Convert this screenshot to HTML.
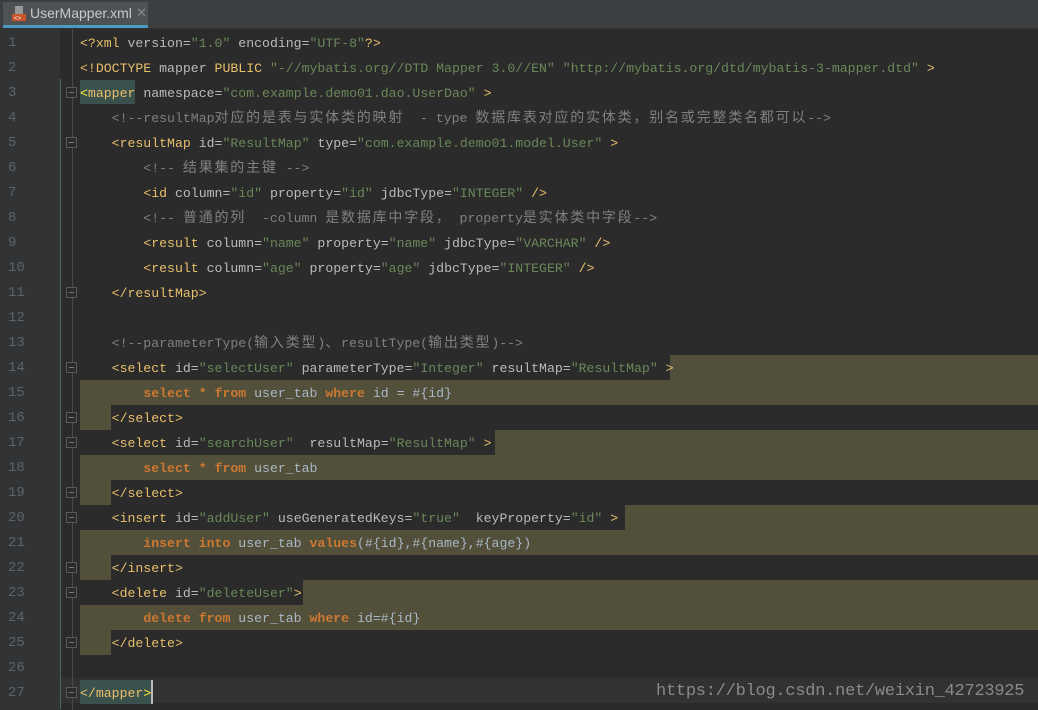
<!DOCTYPE html>
<html><head><meta charset="utf-8"><style>
body{margin:0;width:1038px;height:710px;overflow:hidden;background:#2b2b2b;position:relative;font-family:"Liberation Mono","Noto Sans CJK SC",monospace;}
#tabbar{position:absolute;left:0;top:0;width:1038px;height:28px;background:#3c3f41;border-bottom:1px solid #323232}
#tab{position:absolute;left:3px;top:2px;width:145px;height:24px;background:#4e5254;}
#tab .ul{position:absolute;left:0;bottom:-2px;width:145px;height:3px;background:#4a9ac4}
#tab .t{position:absolute;left:27px;top:3px;font:14px "Liberation Sans",sans-serif;color:#c8c8c8}
#tab .x{position:absolute;left:133px;top:3px;font:13px "Liberation Sans",sans-serif;color:#888}
#gutter{position:absolute;left:0;top:29px;width:60px;height:681px;background:#313335}
#gl{position:absolute;left:60px;top:79px;width:1px;height:630px;background:#3f6b63}
#fl{position:absolute;left:72px;top:29px;width:1px;height:681px;background:#4a4a4a}
.n{position:absolute;left:8px;width:20px;font-size:14px;color:#5f6366;line-height:25px}
.l{position:absolute;left:80px;font-size:13.2px;line-height:25px;white-space:pre;color:#a9b7c6}
.z{font-family:"Noto Sans CJK SC",sans-serif;font-size:14px;letter-spacing:1.8px;line-height:20px}
.tg{color:#e8bf6a}.at{color:#bababa}.v{color:#6a8759}.c{color:#808080}.k{color:#cc7832;font-weight:bold}
.h{position:absolute;background:#52503a}
.f{position:absolute;left:66px;width:11px;height:11px;border:1px solid #5a5a5a;background:#2b2b2b;box-sizing:border-box}
.f:after{content:"";position:absolute;left:2px;top:4px;width:5px;height:1px;background:#777}
</style></head><body>
<div id="tabbar"><div id="tab"><svg style="position:absolute;left:9px;top:4px" width="14" height="16"><rect x="3" y="0" width="8" height="8" fill="#999"/><rect x="0" y="8" width="14" height="7" fill="#c9552c"/><text x="2" y="14" font-size="6" fill="#fff" font-family="Liberation Mono">&lt;&gt;</text></svg><span class="t">UserMapper.xml</span><span class="x">✕</span><div class="ul"></div></div></div>
<div id="gutter"></div>
<div style="position:absolute;left:61px;top:678px;width:977px;height:25px;background:#323232"></div>
<div class="h" style="left:670px;top:355px;width:368px;height:25px"></div>
<div class="h" style="left:80px;top:380px;width:958px;height:25px"></div>
<div class="h" style="left:80px;top:405px;width:31px;height:25px"></div>
<div class="h" style="left:495px;top:430px;width:543px;height:25px"></div>
<div class="h" style="left:80px;top:455px;width:958px;height:25px"></div>
<div class="h" style="left:80px;top:480px;width:31px;height:25px"></div>
<div class="h" style="left:625px;top:505px;width:413px;height:25px"></div>
<div class="h" style="left:80px;top:530px;width:958px;height:25px"></div>
<div class="h" style="left:80px;top:555px;width:31px;height:25px"></div>
<div class="h" style="left:303px;top:580px;width:735px;height:25px"></div>
<div class="h" style="left:80px;top:605px;width:958px;height:25px"></div>
<div class="h" style="left:80px;top:630px;width:31px;height:25px"></div>
<div style="position:absolute;left:80px;top:80px;width:55px;height:24px;background:#3b514d"></div>
<div style="position:absolute;left:80px;top:680px;width:72px;height:24px;background:#3b514d"></div>
<div style="position:absolute;left:151px;top:680px;width:2px;height:24px;background:#bbb"></div>
<div id="gl"></div><div id="fl"></div>
<div class="f" style="top:87px"></div><div class="f" style="top:137px"></div><div class="f" style="top:287px"></div>
<div class="f" style="top:362px"></div><div class="f" style="top:412px"></div><div class="f" style="top:437px"></div><div class="f" style="top:487px"></div>
<div class="f" style="top:512px"></div><div class="f" style="top:562px"></div><div class="f" style="top:587px"></div><div class="f" style="top:637px"></div><div class="f" style="top:687px"></div>
<div class="n" style="top:31px">1</div><div class="n" style="top:56px">2</div><div class="n" style="top:81px">3</div><div class="n" style="top:106px">4</div><div class="n" style="top:131px">5</div><div class="n" style="top:156px">6</div><div class="n" style="top:181px">7</div><div class="n" style="top:206px">8</div><div class="n" style="top:231px">9</div><div class="n" style="top:256px">10</div><div class="n" style="top:281px">11</div><div class="n" style="top:306px">12</div><div class="n" style="top:331px">13</div><div class="n" style="top:356px">14</div><div class="n" style="top:381px">15</div><div class="n" style="top:406px">16</div><div class="n" style="top:431px">17</div><div class="n" style="top:456px">18</div><div class="n" style="top:481px">19</div><div class="n" style="top:506px">20</div><div class="n" style="top:531px">21</div><div class="n" style="top:556px">22</div><div class="n" style="top:581px">23</div><div class="n" style="top:606px">24</div><div class="n" style="top:631px">25</div><div class="n" style="top:656px">26</div><div class="n" style="top:681px">27</div>
<div class="l" style="top:31px"><span class="tg">&lt;?xml </span><span class="at">version=</span><span class="v">"1.0"</span><span class="at"> encoding=</span><span class="v">"UTF-8"</span><span class="tg">?&gt;</span></div>
<div class="l" style="top:56px"><span class="tg">&lt;!DOCTYPE </span><span class="at">mapper </span><span class="tg">PUBLIC </span><span class="v">"-//mybatis.org//DTD Mapper 3.0//EN"</span> <span class="v">"http://mybatis.org/dtd/mybatis-3-mapper.dtd"</span><span class="tg"> &gt;</span></div>
<div class="l" style="top:81px"><span class="tg"><span style="color:#ffef28">&lt;</span>mapper </span><span class="at">namespace=</span><span class="v">"com.example.demo01.dao.UserDao"</span><span class="tg"> &gt;</span></div>
<div class="l" style="top:106px"><span class="c">    &lt;!--resultMap<span class="z">对应的是表与实体类的映射</span>  - type <span class="z">数据库表对应的实体类，别名或完整类名都可以</span>--&gt;</span></div>
<div class="l" style="top:131px">    <span class="tg">&lt;resultMap </span><span class="at">id=</span><span class="v">"ResultMap"</span><span class="at"> type=</span><span class="v">"com.example.demo01.model.User"</span><span class="tg"> &gt;</span></div>
<div class="l" style="top:156px"><span class="c">        &lt;!-- <span class="z">结果集的主键</span> --&gt;</span></div>
<div class="l" style="top:181px">        <span class="tg">&lt;id </span><span class="at">column=</span><span class="v">"id"</span><span class="at"> property=</span><span class="v">"id"</span><span class="at"> jdbcType=</span><span class="v">"INTEGER"</span><span class="tg"> /&gt;</span></div>
<div class="l" style="top:206px"><span class="c">        &lt;!-- <span class="z">普通的列</span>  -column <span class="z">是数据库中字段，</span> property<span class="z">是实体类中字段</span>--&gt;</span></div>
<div class="l" style="top:231px">        <span class="tg">&lt;result </span><span class="at">column=</span><span class="v">"name"</span><span class="at"> property=</span><span class="v">"name"</span><span class="at"> jdbcType=</span><span class="v">"VARCHAR"</span><span class="tg"> /&gt;</span></div>
<div class="l" style="top:256px">        <span class="tg">&lt;result </span><span class="at">column=</span><span class="v">"age"</span><span class="at"> property=</span><span class="v">"age"</span><span class="at"> jdbcType=</span><span class="v">"INTEGER"</span><span class="tg"> /&gt;</span></div>
<div class="l" style="top:281px">    <span class="tg">&lt;/resultMap&gt;</span></div>
<div class="l" style="top:331px"><span class="c">    &lt;!--parameterType(<span class="z">输入类型</span>)<span class="z">、</span>resultType(<span class="z">输出类型</span>)--&gt;</span></div>
<div class="l" style="top:356px">    <span class="tg">&lt;select </span><span class="at">id=</span><span class="v">"selectUser"</span><span class="at"> parameterType=</span><span class="v">"Integer"</span><span class="at"> resultMap=</span><span class="v">"ResultMap"</span><span class="tg"> &gt;</span></div>
<div class="l" style="top:381px">        <span class="k">select</span> <span class="k">*</span> <span class="k">from</span> user_tab <span class="k">where</span> id = #{id}</div>
<div class="l" style="top:406px">    <span class="tg">&lt;/select&gt;</span></div>
<div class="l" style="top:431px">    <span class="tg">&lt;select </span><span class="at">id=</span><span class="v">"searchUser"</span><span class="at">  resultMap=</span><span class="v">"ResultMap"</span><span class="tg"> &gt;</span></div>
<div class="l" style="top:456px">        <span class="k">select</span> <span class="k">*</span> <span class="k">from</span> user_tab</div>
<div class="l" style="top:481px">    <span class="tg">&lt;/select&gt;</span></div>
<div class="l" style="top:506px">    <span class="tg">&lt;insert </span><span class="at">id=</span><span class="v">"addUser"</span><span class="at"> useGeneratedKeys=</span><span class="v">"true"</span><span class="at">  keyProperty=</span><span class="v">"id"</span><span class="tg"> &gt;</span></div>
<div class="l" style="top:531px">        <span class="k">insert</span> <span class="k">into</span> user_tab <span class="k">values</span>(#{id},#{name},#{age})</div>
<div class="l" style="top:556px">    <span class="tg">&lt;/insert&gt;</span></div>
<div class="l" style="top:581px">    <span class="tg">&lt;delete </span><span class="at">id=</span><span class="v">"deleteUser"</span><span class="tg">&gt;</span></div>
<div class="l" style="top:606px">        <span class="k">delete</span> <span class="k">from</span> user_tab <span class="k">where</span> id=#{id}</div>
<div class="l" style="top:631px">    <span class="tg">&lt;/delete&gt;</span></div>
<div class="l" style="top:681px"><span class="tg">&lt;/mapper<span style="color:#ffef28">&gt;</span></span></div>
<div style="position:absolute;left:656px;top:679px;font-size:17px;line-height:25px;color:#8a8a8a;font-family:'Liberation Mono',monospace;letter-spacing:-0.25px">https://blog.csdn.net/weixin_42723925</div>
</body></html>
